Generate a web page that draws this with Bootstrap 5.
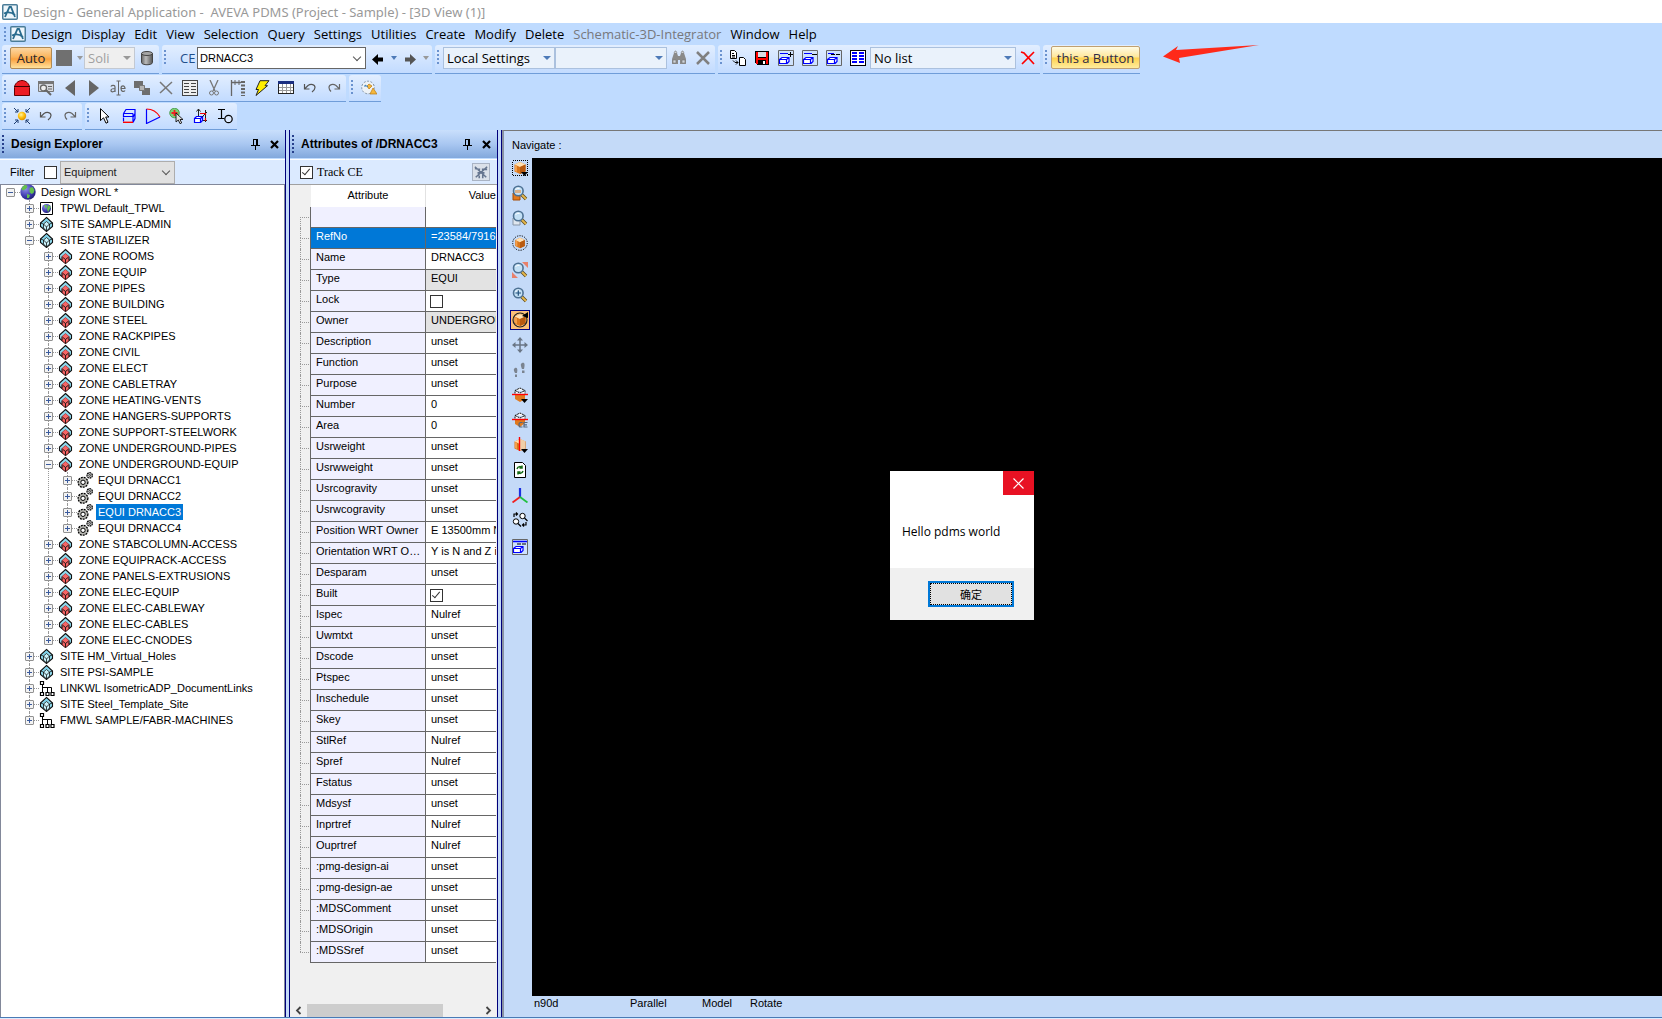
<!DOCTYPE html>
<html lang="en">
<head>
<meta charset="utf-8">
<meta name="viewport" content="width=device-width, initial-scale=1">
<title>Design - General Application - AVEVA PDMS</title>
<link rel="stylesheet" href="https://cdn.jsdelivr.net/npm/bootstrap@5.3.0/dist/css/bootstrap.min.css">
<style>
:root{--sky:#bfdbff;--navy:#00007b;--ui:"Open Sans","Noto Sans CJK SC",sans-serif;--small-ui:"Liberation Sans",Arial,sans-serif}
body{font:13px/20px var(--ui);color:#000;background:var(--sky)}
svg{display:block;flex:none}
.ic{width:16px;height:16px}
.crisp{shape-rendering:crispEdges}
button{padding:0;border:0;background:none;color:inherit}
.title-strip{height:23px;padding-left:2px;color:#999;gap:5px;font-family:"Noto Sans",sans-serif}
.menu-strip{height:22px;padding-left:2px}
.menu-strip a{color:#000;padding:0 4px 0 5px;line-height:20px;text-decoration:none;white-space:nowrap}
.menu-strip a.off{color:#77787c}
.grip{width:8px;flex:none;align-self:stretch;margin:5px 0;background:repeating-linear-gradient(#6a92cf 0 2px,transparent 2px 4px) 2px 0/2px 100% no-repeat}
.tool-row{gap:3px;padding-left:2px}
.tool-group{height:29px;background:linear-gradient(#e2eeff,#c2dbff);border-bottom:1px solid #6f9dd9;border-radius:3px 3px 0 0;padding-bottom:3px}
.tool-group.ends{padding-right:2px}
.tool-row.low .tool-group{height:27px;padding-bottom:0}
.tool-row.low{padding-top:1px}
.tb{width:24px;height:24px;display:flex;align-items:center;justify-content:center;flex:none}
.drop{width:8px;height:20px;display:flex;align-items:center;justify-content:center}
.drop::after,.pick::after{content:"";border:4px solid transparent;border-top-color:#4d7ab8;border-bottom:0;border-left-width:3px;border-right-width:3px}
.drop.off::after,.pick.off::after{border-top-color:#999}
.pick{position:relative;height:22px;flex:none}
.pick::after{position:absolute;right:4px;top:9px;border-left-width:4px;border-right-width:4px;pointer-events:none}
.pick select{appearance:none;width:100%;height:100%;border:1px solid #abc1de;border-radius:0;background:#eaf2fb;padding:0 16px 0 3px;font:13px/18px var(--ui);color:#000}
.pick.off select{background:#efefef;border-color:#c3c9d2;color:#a0a0a0;opacity:1}
.pick.chev::after{border:solid #555;border-width:0 1px 1px 0;width:6px;height:6px;transform:rotate(45deg);top:7px;right:6px}
.w-soli{width:51px}.w-local{width:112px}.w-list{width:146px}.w-ce{width:169px}
.w-ce select{background:#fff;border-color:#666;font:11px/18px var(--small-ui);padding-left:2px}
.ce-label{width:27px;padding-left:10px;color:#1f4e8c}
.btn-auto{width:42px;height:22px;border:1px solid #b08a55;border-radius:2px;background:linear-gradient(#fcd7a3,#fbb45c 45%,#fba23f 55%,#ffe29c);line-height:18px;color:#26262c}
.btn-mine{width:89px;height:23px;border:1px solid #c0a070;border-radius:2px;background:linear-gradient(#fffbe4,#ffe79a 48%,#ffd24d 52%,#ffec9e);line-height:20px;color:#2d2a45;white-space:nowrap}
.arrow{margin-left:20px}
.work{min-height:0}
.dock{font:11px/16px var(--small-ui);min-width:0}
.dock-left{width:285px}
.dock-mid{width:207px}
.splitter{width:5px;flex:none;background:#c4daf8;border:solid var(--navy);border-width:0 1px}
.dock-head{height:28px;background:linear-gradient(#c9dffc,#a9c7f1 50%,#82a8dc);font:bold 12px/28px var(--small-ui);padding-right:1px}
.dock-head h2{font:inherit;margin:0 auto 0 3px;white-space:nowrap}
.dock-head .grip{background-image:repeating-linear-gradient(#27408b 0 2px,transparent 2px 4px)}
.dock-head button{width:19px;height:20px;display:flex;align-items:center;justify-content:center}
.filter-bar{height:25px;margin-top:1px;background:#dbeaff;border-top:1px solid #fff;padding:0 7px 0 10px}
.filter-bar .pick{width:115px;height:23px;margin-left:3px}
.filter-bar select{background:#e1e1e1;border-color:#adadad;font:11px/18px var(--small-ui);color:#222}
.filter-label{width:34px}
.tick{appearance:none;width:13px;height:13px;border:1px solid #333;background:#fff;margin:0;flex:none;position:relative;display:block}
.tick:checked::before{content:"";position:absolute;left:3px;top:0;width:4px;height:8px;border:solid #333;border-width:0 1px 1px 0;transform:rotate(40deg)}
.track{font:12px/16px "Liberation Serif",serif;margin-left:4px}
.brush{width:18px;height:18px;background:#dbe1ea;border:1px solid #a9b3c4;display:flex;align-items:center;justify-content:center}
.tree-box{background:#fff;border:1px solid #82889a;border-width:0 1px;box-shadow:inset 0 1px #82889a;overflow:hidden}
.tree-box ul{list-style:none;margin:0;padding:0}
.tree-box ul ul{padding-left:19px}
.tree-box li{position:relative}
.tree-box ul ul>li::before{content:"";position:absolute;left:9px;top:0;bottom:0;border-left:1px dotted #999}
.tree-box ul ul>li:last-child::before{bottom:auto;height:8px}
.node{display:flex;align-items:center;height:16px;padding-left:5px;white-space:nowrap;position:relative}
.node .dots{width:5px;border-top:1px dotted #999}
.node .lbl{margin-left:3px;padding:0 2px;line-height:16px}
.node .lbl.sel{background:#0078d7;color:#fff}
.exp{width:9px;height:9px;border:1px solid #919191;border-radius:1px;background:linear-gradient(90deg,#3b5b9d,#3b5b9d) center/5px 1px no-repeat,linear-gradient(#3b5b9d,#3b5b9d) center/1px 5px no-repeat,#f3f3f3}
.exp.open{background:linear-gradient(#3b5b9d,#3b5b9d) center/5px 1px no-repeat,#f3f3f3}
.attr-area{background:#f0f0f0;border-top:1px solid #a0a0a0;overflow:hidden;padding-right:1px}
.attr-grid{table-layout:fixed;width:100%;border-collapse:separate;border-spacing:0}
.attr-grid th,.attr-grid td{height:21px;padding:0 0 4px 5px;font-weight:400;white-space:nowrap;overflow:hidden;border-bottom:1px solid #666;border-right:1px solid #666;line-height:16px}
.attr-grid td{background:#fff;border-right:0}
.attr-grid tbody th{background:#f0f0ff;text-overflow:ellipsis;padding-right:4px}
.attr-grid thead th{height:22px;background:#fff;border-bottom:0;border-right-color:#e2e2e2;text-align:center;padding:0 0 2px}
.attr-grid thead th:last-child{border-right:0;text-align:right}
.attr-grid .gut{background:#f0f0f0!important;border-bottom:0;border-right:1px solid #666;padding:0;position:relative;overflow:visible}
.attr-grid thead .gut{border-right-color:#f0f0f0}
.attr-grid tbody .gut::before{content:"";position:absolute;left:10px;right:1px;top:10px;bottom:0;border:dotted #999;border-width:1px 0 0 1px}
.attr-grid tbody tr:not(:first-child) .gut::after{content:"";position:absolute;left:10px;top:0;height:10px;border-left:1px dotted #999}
.attr-grid tbody tr:last-child .gut::before{border-left:0}
.attr-grid .fixed{background:#e3e3e3}
.attr-grid .picked th:not(.gut),.attr-grid .picked td:not(.gut){background:#0078d7;color:#fff}
.attr-grid td:has(.tick){padding-bottom:0}
.attr-grid .tick{margin:0 0 0 -1px}
.c-gut{width:21px}.c-name{width:115px}
.hbar{height:13px;background:#f0f0f0}
.hbar button{width:17px;height:13px;display:flex;align-items:center;justify-content:center}
.hbar .thumb{width:136px;height:13px;background:#cdcdcd}
.view{background:#c4daf8;border-top:1px solid #777;border-left:2px solid #8a93a3;font:11px/16px var(--small-ui);min-width:0}
.nav-label{height:27px;padding:6px 0 0 8px;margin:0}
.nav-tools{width:28px;flex:none;margin-top:-3px}
.nav-tools .vt{height:25px;width:28px;display:flex;align-items:center;justify-content:center;padding-left:4px}
.nav-tools .gap-after{margin-bottom:2px}
.nav-tools .on span{width:20px;height:20px;border:1px solid var(--navy);background:#fcc078;display:flex;align-items:center;justify-content:center}
.canvas3d{background:#000;position:relative}
.view-status{height:21px;padding-left:30px}
.view-status span{line-height:14px}
.s1{width:96px}.s2{width:72px}.s3{width:48px}
.msg-box{position:absolute;left:358px;top:313px;width:144px;height:149px;background:#fff;font:12px/16px var(--ui)}
.msg-box .shut{width:31px;height:24px;background:#e81123;display:flex;align-items:center;justify-content:center}
.msg-box p{margin:0;padding:0 12px}
.msg-foot{height:52px;background:#f0f0f0;padding:13px 20px 0 0}
.ok{width:86px;height:26px;background:#e1e1e1;border:2px solid #0078d7;outline:1px dotted #000;outline-offset:-3px;font:11px/20px "Noto Sans CJK SC",sans-serif}
.base-line{height:2px;background:#dcebff;border-top:1px solid #4a7ab5}
</style>
</head>
<body class="d-flex flex-column vh-100 overflow-hidden">

<svg width="0" height="0" class="position-absolute" aria-hidden="true">
 <defs>
  <radialGradient id="gGlobe" cx=".35" cy=".3" r=".8"><stop offset="0" stop-color="#8d8dea"/><stop offset=".6" stop-color="#3d3aae"/><stop offset="1" stop-color="#1b1b66"/></radialGradient>
  <radialGradient id="gSun" cx=".4" cy=".35" r=".7"><stop offset="0" stop-color="#fff3a0"/><stop offset=".5" stop-color="#ffc20e"/><stop offset="1" stop-color="#d98a00"/></radialGradient>
  <linearGradient id="gCyl"><stop offset="0" stop-color="#666"/><stop offset=".4" stop-color="#bbb"/><stop offset="1" stop-color="#555"/></linearGradient>
 </defs>
 <symbol id="i-logo" viewBox="0 0 16 16"><rect x=".75" y=".75" width="14.500" height="14.500" rx="1" fill="#eef6fb" stroke="#4a7c98" stroke-width="1.500"/><path d="M3 13 7.500 3h1.500l4 10M2 9.500c4-2 8-1 11 1.500" fill="none" stroke="#2a6c8e" stroke-width="1.800"/></symbol>
 <symbol id="i-globe" viewBox="0 0 16 16"><circle cx="8" cy="8" r="7.700" fill="url(#gGlobe)"/><path d="M4 1.500c2-1 4 0 3 2S5 5 4 6 2 6 1.500 5 3 2.500 4 1.500zM9.500 4l3-1 2 3-1 3-2 1-2-2zM7 10l3 1-1 3-2 0z" fill="#63c04d"/></symbol>
 <symbol id="i-tpwl" viewBox="0 0 16 16"><path d="M1.500 2.500h12v12h-12z" fill="#fff" stroke="#000"/><circle cx="7.500" cy="8.500" r="4.500" fill="url(#gGlobe)"/><path d="M5 5l3 0-1 4zM9 5l3 2-3 5-1-3z" fill="#63c04d"/></symbol>
 <symbol id="i-site" viewBox="0 0 16 16"><path d="M7.500 1.500 13.500 7v3.500L7.500 15.500 1.500 10.500V7z" fill="#8fdcf0" stroke="#111" stroke-width="1.100"/><path d="M7.500 5.500 10.500 8v4L7.500 15l-3-3V8z" fill="#c8f1fa" stroke="#111" stroke-width=".8"/><path d="M7.500 15v-4M7.500 11 4.500 8M7.500 11l3-3M4.500 8 1.500 7M10.500 8l3-1" stroke="#111" stroke-width=".8" fill="none"/><path d="M7.500 2.500 10 5 7.500 4.500 3 7.500z" fill="#7bd0ea"/></symbol>
 <symbol id="i-zone" viewBox="0 0 16 16"><path d="M7.500 1.500 13.500 7v3.500L7.500 15.500 1.500 10.500V7z" fill="#8fdcf0" stroke="#111" stroke-width="1.100"/><path d="M7.500 5.500 11 8.500v4l-3.500 3-3.500-3v-4z" fill="#f76464" stroke="#8b2020" stroke-width=".6"/><path d="M7.500 15.500V11.500L5 9.500M7.500 11.500l2.500-2M4 12.500v-4M11 12.500v-4" stroke="#111" stroke-width=".9" fill="none"/></symbol>
 <symbol id="i-equi" viewBox="0 0 16 16"><circle cx="6" cy="10.300" r="4.900" fill="#b9b9b4" stroke="#000" stroke-width="1.300" stroke-dasharray="2 .9"/><circle cx="6" cy="10.300" r="2.200" fill="#fff" stroke="#000"/><circle cx="12.700" cy="3.400" r="2.700" fill="#ccc" stroke="#000" stroke-width="1.200" stroke-dasharray="1.800 .6"/><circle cx="12.700" cy="3.400" r=".9" fill="#fff" stroke="#000" stroke-width=".7"/></symbol>
 <symbol id="i-link" viewBox="0 0 16 16"><path d="M3.500 5v7M3.500 7.500h9V12M8.500 7.500V12" fill="none" stroke="#000"/><path d="M1.500 1.500h3v3h-3zM1.500 12.500h3v3h-3zM7 12.500h3v3H7zM12 12.500h3v3h-3z" fill="#fff" stroke="#000" stroke-width="1.200"/></symbol>
 <symbol id="i-undo" viewBox="0 0 16 16"><path d="M2.500 4v5h5M3 8.500l3-3c3-2 7-1 7 2 0 2-1 3-3 4.500" fill="none" stroke="#555" stroke-width="1.200"/></symbol>
 <symbol id="i-redo" viewBox="0 0 16 16"><path d="M13.500 4v5h-5M13 8.500l-3-3c-3-2-7-1-7 2 0 2 1 3 2 4" fill="none" stroke="#666" stroke-width="1.200"/></symbol>
 <symbol id="i-boxwin" viewBox="0 0 16 16"><path d="M.5.500h15v15H.5z" fill="#cfe2fc" stroke="#666"/><path d="M1.500 9.500 4 7.500h7v4l-2 2M1.500 9.500h7v4h-7zM8.500 9.500l2.500-2" fill="#fff" stroke="#00f" stroke-width="1.200"/></symbol>
 <symbol id="i-cube" viewBox="0 0 16 16"><path d="M2.500 4.500 8 2l5.500 2.500v7L8 14l-5.500-2.500z" fill="#d9761c"/><path d="M2.500 4.500 8 2l5.500 2.500L8 7z" fill="#ffe0b0"/><path d="M8 7l5.500-2.500v7L8 14z" fill="#b85a10"/><path d="M3 5v6l2 1V6z" fill="#f5a04a"/></symbol>
 <symbol id="i-lens" viewBox="0 0 16 16"><path d="M9 9l5 5" stroke="#5a4a20" stroke-width="3.400"/><path d="M9.500 9.500l4.500 4.500" stroke="#e7b84b" stroke-width="1.800"/><circle cx="6.300" cy="6" r="4.800" fill="#c3e0f5" stroke="#4d7193" stroke-width="1.600"/><path d="M3.500 5a3 3 0 0 1 4-1.500" stroke="#fff" fill="none"/></symbol>
</svg>

<header class="bg-white title-strip d-flex align-items-center">
 <svg class="ic"><use href="#i-logo"/></svg>
 <span>Design - General Application -&nbsp; AVEVA PDMS (Project - Sample) - [3D View (1)]</span>
</header>

<nav class="menu-strip d-flex align-items-center" aria-label="Main menu">
 <span class="grip my-1"></span>
 <svg class="ic"><use href="#i-logo"/></svg>
 <ul class="nav flex-nowrap" id="menu"></ul>
</nav>

<div class="tool-row d-flex">
 <div class="tool-group d-flex align-items-center">
  <span class="grip"></span>
  <button class="btn-auto">Auto</button>
  <button class="tb" aria-label="Colour"><svg class="ic"><path d="M0 0h16v16H0z" fill="#707070"/></svg></button>
  <button class="drop off" aria-label="Colour list"></button>
  <div class="pick off w-soli"><select aria-label="Fill" disabled><option>Soli</option></select></div>
  <button class="tb" aria-label="Cylinder"><svg class="ic" viewBox="0 0 16 16"><path d="M2.500 3.500v9c0 3 11 3 11 0v-9z" fill="url(#gCyl)" stroke="#444"/><ellipse cx="8" cy="3.500" rx="5.500" ry="2" fill="#a5a5a5" stroke="#444"/></svg></button>
 </div>
 <div class="tool-group ends d-flex align-items-center">
  <span class="grip"></span>
  <label class="ce-label" for="ce">CE</label>
  <div class="pick chev w-ce"><select id="ce"><option>DRNACC3</option></select></div>
  <button class="tb" aria-label="Back"><svg class="ic" viewBox="0 0 16 16"><path d="M2 9.500 8 4v3.500h5v4H8V15z"/></svg></button>
  <button class="drop" aria-label="Back list"></button>
  <button class="tb" aria-label="Forward"><svg class="ic" viewBox="0 0 16 16"><path d="M14 9.500 8 4v3.500H3v4h5V15z" fill="#555"/></svg></button>
  <button class="drop off" aria-label="Forward list"></button>
 </div>
 <div class="tool-group d-flex align-items-center">
  <span class="grip"></span>
  <div class="pick w-local"><select aria-label="Settings"><option>Local Settings</option></select></div>
  <div class="pick w-local"><select aria-label="Search"><option></option></select></div>
  <button class="tb" aria-label="Find"><svg class="ic" viewBox="0 0 16 16"><path d="M1 9l2-6h3l1 3h2l1-3h3l2 6v5H9v-4H7v4H1z" fill="#8a8a8a"/><path d="M3 3l1-2h1l1 2M10 3l1-2h1l1 2M2 10h3v3H2zM11 10h3v3h-3z" fill="#cfd3d8" stroke="#777" stroke-width=".6"/></svg></button>
  <button class="tb" aria-label="Clear"><svg class="ic" viewBox="0 0 16 16"><path d="M2 2l12 12M14 2 2 14" stroke="#808080" stroke-width="2.500"/></svg></button>
 </div>
 <div class="tool-group d-flex align-items-center">
  <span class="grip"></span>
  <button class="tb" aria-label="Copy list"><svg class="ic" viewBox="0 0 16 16"><path d="M.5.500h4l2 2v6h-6zM9.500 7.500h4l2 2v6h-6z" fill="#fff" stroke="#000"/><path d="M2 3.500h2M2 5.500h3M2 7h3M3 10.500l2 2h3M6 10.500l2 2-2 2" fill="none" stroke="#000"/></svg></button>
  <button class="tb" aria-label="Save"><svg class="ic crisp" viewBox="0 0 16 16"><path d="M1 1h14v14H3l-2-2z"/><path d="M2 2h2v12H2zM12 2h2v12h-2zM4 8h8v2H4z" fill="#f00"/><path d="M4 2h8v5H4z" fill="#d9dde3"/><path d="M9 11h2v3H9z" fill="#fff"/></svg></button>
  <button class="tb" aria-label="Add view"><svg class="ic" viewBox="0 0 16 16"><use href="#i-boxwin"/><path d="M2 3.500h8" stroke="#00f"/><path d="M10 4.500h5M12.500 2v5" stroke="#000"/></svg></button>
  <button class="tb" aria-label="Remove view"><svg class="ic" viewBox="0 0 16 16"><use href="#i-boxwin"/><path d="M2 3.500h8" stroke="#00f"/><path d="M10 4.500h5" stroke="#000"/></svg></button>
  <button class="tb" aria-label="Clear views"><svg class="ic" viewBox="0 0 16 16"><use href="#i-boxwin"/><path d="M2 3.500h6" stroke="#00f"/><path d="M5 4.500h4M10 4.500h4" stroke="#000"/></svg></button>
  <button class="tb" aria-label="Lists"><svg class="ic crisp" viewBox="0 0 16 16"><path d="M.5.500h15v15H.5z" fill="#fff" stroke="#000"/><path d="M2 3h5M2 6h5M2 9h5M2 12h5M9 3h5M9 6h5M9 9h5M9 12h5" stroke="#00f" stroke-width="2"/></svg></button>
  <div class="pick w-list"><select aria-label="List"><option>No list</option></select></div>
  <button class="tb" aria-label="Delete list"><svg class="ic" viewBox="0 0 16 16"><path d="M1 2l3 1 10 11M14 2 2 14" fill="none" stroke="#f00" stroke-width="1.700"/></svg></button>
 </div>
 <div class="tool-group d-flex align-items-center">
  <span class="grip"></span>
  <button class="btn-mine">this a Button</button>
 </div>
 <svg class="arrow" width="100" height="22" viewBox="0 0 100 22"><path d="M0 11.500 15 1l-2 4L96 0 16 13l1 5z" fill="#ff2a1a"/></svg>
</div>

<div class="tool-row low d-flex">
 <div class="tool-group d-flex align-items-center">
  <span class="grip"></span>
  <button class="tb" aria-label="Site"><svg class="ic" viewBox="0 0 16 16"><path d="M.5 15.500v-8C.5 4 4 .5 8 .5s7.500 3.500 7.500 7v8z" fill="#ed1c24" stroke="#600"/><path d="M0 6.500h16" stroke="#400"/></svg></button>
  <button class="tb" aria-label="Search form"><svg class="ic" viewBox="0 0 16 16"><path d="M.5 1.500h15v10H.5z" fill="#d6d9df" stroke="#777"/><path d="M0 2.500h16" stroke="#777" stroke-width="3"/><path d="M10 6.500h4M10 9h4" stroke="#666"/><circle cx="5.500" cy="8" r="3" fill="#eee" stroke="#666" stroke-width="1.300"/><path d="M8 10l5 5" stroke="#666" stroke-width="2"/></svg></button>
  <button class="tb" aria-label="Previous"><svg class="ic" viewBox="0 0 16 16"><path d="M13 0v16L3 8z" fill="#666"/></svg></button>
  <button class="tb" aria-label="Next"><svg class="ic" viewBox="0 0 16 16"><path d="M3 0v16l10-8z" fill="#666"/></svg></button>
  <button class="tb" aria-label="Rename"><svg class="ic" viewBox="0 0 16 16"><path d="M6.500 1h4M8.500 1v14M6.500 15h4" stroke="#666" fill="none"/><path d="M.8 6.500C2 5 5 5 5 7v5M5 8.500c-2 0-4 0-4 2s3 1.500 4 0M11 8.500h4c0-3.500-4-3.500-4 0 0 3.500 3 3.500 4 2" stroke="#666" fill="none" stroke-width="1.200"/></svg></button>
  <button class="tb" aria-label="Copy"><svg class="ic" viewBox="0 0 16 16"><path d="M0 1h9v7H0zM8 8h8v7H8z" fill="#6e6e6e"/><path d="M5.500 5.500h5v5h-5z" fill="#b5b5b5" stroke="#777"/></svg></button>
  <button class="tb" aria-label="Delete"><svg class="ic" viewBox="0 0 16 16"><path d="M2 2l12 12M14 2 2 13" stroke="#777" stroke-width="1.500"/></svg></button>
  <button class="tb" aria-label="Attributes"><svg class="ic crisp" viewBox="0 0 16 16"><path d="M.5.500h15v15H.5z" fill="#eee" stroke="#444"/><path d="M2 3.500h5M2 6.500h5M2 9.500h5M2 12.500h5M9 3.500h5M9 6.500h5M9 9.500h5M9 12.500h5" stroke="#444"/></svg></button>
  <button class="tb" aria-label="Cut"><svg class="ic" viewBox="0 0 16 16"><path d="M4 0l5 11M12 0 7 11" stroke="#777" stroke-width="1.300"/><circle cx="5.500" cy="13" r="2" fill="none" stroke="#777"/><circle cx="10.500" cy="13" r="2" fill="none" stroke="#777"/></svg></button>
  <button class="tb" aria-label="Dimension"><svg class="ic" viewBox="0 0 16 16"><path d="M1.500 0v16M2 2.500h9" stroke="#666" stroke-width="1.300"/><path d="M13 1v15" stroke="#666" stroke-width="4" stroke-dasharray="2 1.500"/><path d="M5 0v5M9 0v5" stroke="#666"/></svg></button>
  <button class="tb" aria-label="Run"><svg class="ic" viewBox="0 0 16 16"><path d="M6 .7h9l-4 5h2.500L2 15.500 4.500 9.500H2z" fill="#ffee00" stroke="#222"/></svg></button>
  <button class="tb" aria-label="Table"><svg class="ic crisp" viewBox="0 0 16 16"><path d="M.5 1.500h15v12H.5z" fill="#fff" stroke="#222"/><path d="M0 1h16v3H0z" fill="#1b2f80"/><path d="M1 7.500h14M1 10.500h14M4.500 4v9M8.500 4v9M12.500 4v9" stroke="#999"/></svg></button>
  <button class="tb" aria-label="Undo"><svg class="ic"><use href="#i-undo"/></svg></button>
  <button class="tb" aria-label="Redo"><svg class="ic"><use href="#i-redo"/></svg></button>
 </div>
 <div class="tool-group d-flex align-items-center">
  <span class="grip"></span>
  <button class="tb" aria-label="Clash"><svg class="ic" viewBox="0 0 16 16"><circle cx="7" cy="7.500" r="6.300" fill="#eef2f6" stroke="#7f8fa0" stroke-dasharray="2 1.500"/><path d="M8 4l3 2-3 3-2-3zM12 8l4 6H9z" fill="#f6b73c" stroke="#b97a10" stroke-width=".7"/><path d="M4 5l3 2M4 5v2" stroke="#357ab8"/></svg></button>
 </div>
</div>

<div class="tool-row low d-flex">
 <div class="tool-group d-flex align-items-center">
  <span class="grip"></span>
  <button class="tb" aria-label="Light"><svg class="ic" viewBox="0 0 16 16"><path d="M0 0l4 4M4 1v3H1M16 0l-4 4M12 1v3h3M0 16l4-4M1 12h3v3M16 16l-4-4M15 12h-3v3" stroke="#1c3c70" fill="none"/><circle cx="8" cy="8" r="4.200" fill="url(#gSun)"/></svg></button>
  <button class="tb" aria-label="Undo view"><svg class="ic"><use href="#i-undo"/></svg></button>
  <button class="tb" aria-label="Redo view"><svg class="ic"><use href="#i-redo"/></svg></button>
 </div>
 <div class="tool-group d-flex align-items-center">
  <span class="grip"></span>
  <button class="tb" aria-label="Select"><svg class="ic" viewBox="0 0 16 16"><path d="M3.500.7v12l3-3 2.500 5.500 2-1L8.700 9H12z" fill="#fff" stroke="#000"/></svg></button>
  <button class="tb" aria-label="Box"><svg class="ic" viewBox="0 0 16 16"><path d="M2.500 5.500 5 1.500h9v9l-2 4M2.500 5.500h9.500M2.500 5.500v3h10l1.500-3M2.500 9.500v4M12 5.500v9" fill="none" stroke="#00f" stroke-width="1.200"/><path d="M2 14.300h10" stroke="#f00" stroke-width="1.400"/></svg></button>
  <button class="tb" aria-label="Sector"><svg class="ic" viewBox="0 0 16 16"><path d="M1.500 1v14.500L15 9" fill="none" stroke="#00f" stroke-width="1.200"/><path d="M1.500 1C8 1 12 4 15 9" fill="none" stroke="#f00" stroke-width="1.200"/></svg></button>
  <button class="tb" aria-label="Pick add"><svg class="ic" viewBox="0 0 16 16"><circle cx="5.500" cy="5" r="4.800" fill="#7ccf74" stroke="#2d8a2d" stroke-width=".7"/><path d="M5.500 2v6M2.500 5h6" stroke="#e22" stroke-width="1.800"/><path d="M7 5v9l2.300-2 1.700 3.700 1.700-.8L11 11.500h3z" fill="#ddd" stroke="#111" stroke-width=".9"/></svg></button>
  <button class="tb" aria-label="Axes box"><svg class="ic" viewBox="0 0 16 16"><path d="M1.500 10.500h6v4h-6zM1.500 10.500l2-2h6l-2 2M9.500 8.500v4l-2 2" fill="#fff" stroke="#00f" stroke-width="1.200"/><path d="M5.500 8V1M3.500 3.500l2-2.500 2 2.500M12.500 2v12M9 9l5-5M10 12.500h4" stroke="#222" fill="none"/><path d="M12.500 5v2M12.500 10v3M7 5.500h5" stroke="#e00" stroke-width="1.200"/></svg></button>
  <button class="tb" aria-label="Connect"><svg class="ic" viewBox="0 0 16 16"><path d="M1 1.500h7M4.500 1.500v9h3M1 10.500h3" fill="none" stroke="#000" stroke-width="1.200"/><circle cx="11.500" cy="11" r="3.700" fill="#dceaff" stroke="#000" stroke-width="1.200"/></svg></button>
 </div>
</div>

<main class="work d-flex flex-grow-1">
 <section class="dock dock-left d-flex flex-column flex-shrink-0">
  <div class="dock-head d-flex align-items-center"><span class="grip"></span><h2>Design Explorer</h2>
   <button aria-label="Pin explorer"><svg width="9" height="11" viewBox="0 0 9 11" class="crisp"><path d="M2 0h5v6H2zM0 6h9v1H0zM4 7h1v4H4z"/><path d="M3 1h2v5H3z" fill="#a9c7f1"/></svg></button>
   <button aria-label="Close explorer"><svg width="9" height="9" viewBox="0 0 9 9"><path d="M1 1l7 7M8 1 1 8" stroke="#000" stroke-width="2.200"/></svg></button>
  </div>
  <div class="filter-bar d-flex align-items-center">
   <label for="flt" class="filter-label">Filter</label>
   <input id="flt" type="checkbox" class="tick">
   <div class="pick chev"><select aria-label="Filter type"><option>Equipment</option></select></div>
  </div>
  <div class="tree-box flex-grow-1" id="tree"></div>
 </section>
 <div class="splitter"></div>
 <section class="dock dock-mid d-flex flex-column flex-shrink-0">
  <div class="dock-head d-flex align-items-center"><span class="grip"></span><h2>Attributes of /DRNACC3</h2>
   <button aria-label="Pin attributes"><svg width="9" height="11" viewBox="0 0 9 11" class="crisp"><path d="M2 0h5v6H2zM0 6h9v1H0zM4 7h1v4H4z"/><path d="M3 1h2v5H3z" fill="#a9c7f1"/></svg></button>
   <button aria-label="Close attributes"><svg width="9" height="9" viewBox="0 0 9 9"><path d="M1 1l7 7M8 1 1 8" stroke="#000" stroke-width="2.200"/></svg></button>
  </div>
  <div class="filter-bar d-flex align-items-center">
   <input id="trk" type="checkbox" class="tick" checked>
   <label for="trk" class="track me-auto">Track CE</label>
   <button class="brush" aria-label="Clear filter"><svg width="14" height="14" viewBox="0 0 16 16"><path d="M1 2l13 12M15 2 2 14M1 4l6 1M9 5h6M4 9h8M6 12v3M10 11v4" stroke="#65758f" stroke-width="1.800"/></svg></button>
  </div>
  <div class="attr-area flex-grow-1">
   <table class="attr-grid"><colgroup><col class="c-gut"><col class="c-name"><col></colgroup>
    <thead><tr><th class="gut"></th><th>Attribute</th><th>Value</th></tr></thead><tbody id="attrs"></tbody></table>
  </div>
  <div class="hbar d-flex">
   <button aria-label="Scroll left"><svg width="7" height="9" viewBox="0 0 7 9"><path d="M5.500 1 2 4.500 5.500 8" fill="none" stroke="#444" stroke-width="1.800"/></svg></button>
   <span class="thumb me-auto"></span>
   <button aria-label="Scroll right"><svg width="7" height="9" viewBox="0 0 7 9"><path d="M1.500 1 5 4.500 1.500 8" fill="none" stroke="#444" stroke-width="1.800"/></svg></button>
  </div>
 </section>
 <div class="splitter"></div>
 <section class="view d-flex flex-column flex-grow-1">
  <p class="nav-label">Navigate :</p>
  <div class="d-flex flex-grow-1">
   <div class="nav-tools" id="tools">
    <button class="vt" aria-label="Zoom to selection"><svg class="ic" viewBox="0 0 16 16"><path class="crisp" d="M.5.500h15v15H.5z" fill="none" stroke="#000" stroke-dasharray="1 1"/><use href="#i-cube"/><path d="M9 12h7l-3.500 4z"/></svg></button>
    <button class="vt" aria-label="Zoom to element"><svg class="ic" viewBox="0 0 16 16"><path d="M1 8h7v7H1z" fill="#e57a1c" stroke="#a34c08"/><use href="#i-lens"/><path d="M3 5h6v3H3z" fill="#d9b08a"/></svg></button>
    <button class="vt" aria-label="Zoom to view"><svg class="ic" viewBox="0 0 16 16"><path d="M1 8h7v7H1z" fill="#dfe6ee" stroke="#8795a6"/><use href="#i-lens"/></svg></button>
    <button class="vt gap-after" aria-label="Limits"><svg class="ic" viewBox="0 0 16 16"><circle cx="8" cy="8" r="7.300" fill="none" stroke="#000" stroke-dasharray="1.200 1.200"/><svg x="1" y="1" width="14" height="14"><use href="#i-cube"/></svg></svg></button>
    <button class="vt" aria-label="Zoom extents"><svg class="ic" viewBox="0 0 16 16"><path d="M10 0h6v6zM0 10v6h6z" fill="#e8806a"/><use href="#i-lens"/></svg></button>
    <button class="vt" aria-label="Zoom in"><svg class="ic" viewBox="0 0 16 16"><use href="#i-lens"/><path d="M3.500 6h5.500M6.300 3.300v5.500" stroke="#23507c" stroke-width="1.200"/></svg></button>
    <button class="vt on" aria-label="Rotate"><span><svg class="ic" viewBox="0 0 16 16"><use href="#i-cube"/><circle cx="8" cy="8" r="7" fill="none" stroke="#222" stroke-width="1.200"/><path d="M10 4l6-4v6z"/></svg></span></button>
    <button class="vt" aria-label="Pan"><svg class="ic" viewBox="0 0 16 16"><path d="M8 1v14M1 8h14" stroke="#6a7685" stroke-width="1.500"/><path d="M8 0l3 3.500H5zM8 16l3-3.500H5zM0 8l3.500-3v6zM16 8l-3.500-3v6z" fill="#6a7685"/></svg></button>
    <button class="vt" aria-label="Walk"><svg class="ic" viewBox="0 0 16 16"><path d="M3 6c2-1 3 1 2 5H3C2 9 1 7 3 6zM3 12.500h2V15H3zM10 1c3-1 3 2 2 6h-2C9 4 8 2 10 1zM10 8.500h2.500V11H10z" fill="#7b8490"/></svg></button>
    <button class="vt" aria-label="Clip box"><svg class="ic" viewBox="0 0 16 16"><path d="M3 7h10v5l-5 3-5-3z" fill="#e07a20"/><path d="M3 6.500V3.500L8 1l5 2.500v3M3 3.500 8 6l5-2.500" fill="#fff" stroke="#111" stroke-dasharray="2 .7"/><path d="M0 7.500h16" stroke="#f00" stroke-width="1.400"/><path d="M9 12h7l-3.500 4z"/></svg></button>
    <button class="vt" aria-label="Clip element"><svg class="ic" viewBox="0 0 16 16"><path d="M3 7h10v4l-5 4-5-3z" fill="#e07a20"/><path d="M3 6.500V3.500L8 1l5 2.500v3M3 3.500 8 6l5-2.500" fill="#fff" stroke="#111" stroke-dasharray="2 .7"/><path d="M0 7.500h16" stroke="#f00" stroke-width="1.400"/><path d="M10.500 10.500h-2c-2 0-2 4.500 0 4.500h2M15.500 10.500H12V15h3.500M12 12.800h3" fill="none" stroke="#56687e" stroke-width="1.200"/></svg></button>
    <button class="vt" aria-label="Clip plane"><svg class="ic" viewBox="0 0 16 16"><use href="#i-cube"/><path d="M8 2l5.500 2.500v7L8 14z" fill="#efcfa8"/><path d="M7.500 0v14" stroke="#f00" stroke-width="1.400"/><path d="M9 12h7l-3.500 4z"/></svg></button>
    <button class="vt" aria-label="Refresh"><svg class="ic" viewBox="0 0 16 16"><path d="M2.500.500h8l3 3v12h-11z" fill="#fff" stroke="#000"/><path d="M5 7c1-3 4-3 5-1M10 3.500V6H7.500M11 9c-1 3-4 3-5 1M6 12.500V10h2.500" fill="none" stroke="#176b17" stroke-width="1.500"/></svg></button>
    <button class="vt" aria-label="Axes"><svg class="ic" viewBox="0 0 16 16"><path d="M8 10V1" stroke="#1a2fe0" stroke-width="2.200"/><path d="M8 10 .5 15.500" stroke="#f02020" stroke-width="1.800"/><path d="M8 10l7.500 5.500" stroke="#22c040" stroke-width="1.800"/></svg></button>
    <button class="vt gap-after" aria-label="Swap zoom"><svg class="ic" viewBox="0 0 16 16"><g fill="#fff" stroke="#000"><circle cx="10.500" cy="4" r="2.700"/><circle cx="4" cy="9.500" r="2.700"/></g><path d="M12.500 6l3 3M6 11.500l3 3M2 5V2h3M4 .5 5.500 2 4 3.500M14 10v3h-3M12 11.500 10.500 13l1.500 1.500" fill="none" stroke="#000" stroke-width="1.200"/></svg></button>
    <button class="vt" aria-label="View list"><svg class="ic" viewBox="0 0 16 16"><use href="#i-boxwin"/><path d="M1 2.500h14" stroke="#00f" stroke-width="1.500"/><path d="M5 5h4M10 5h4" stroke="#000"/></svg></button>
   </div>
   <div class="canvas3d flex-grow-1">
    <div class="msg-box d-flex flex-column" role="dialog" aria-label="Message">
     <button class="shut align-self-end" aria-label="Close message"><svg width="11" height="11" viewBox="0 0 11 11"><path d="M.5.500l10 10M10.500.500l-10 10" stroke="#fff" stroke-width="1.200"/></svg></button>
     <p class="my-auto">Hello pdms world</p>
     <div class="msg-foot d-flex justify-content-end"><button class="ok">确定</button></div>
    </div>
   </div>
  </div>
  <div class="view-status d-flex"><span class="s1">n90d</span><span class="s2">Parallel</span><span class="s3">Model</span><span>Rotate</span></div>
 </section>
</main>
<div class="base-line"></div>

<script>
const menu = ['Design','Display','Edit','View','Selection','Query','Settings','Utilities','Create','Modify','Delete','Schematic-3D-Integrator','Window','Help'];
document.getElementById('menu').innerHTML = menu.map(m => `<li><a href="#"${m.startsWith('Schem') ? ' class="off"' : ''}>${m}</a></li>`).join('');

const zone = (name, kids) => ({ t: 'ZONE ' + name, i: 'zone', kids });
const site = (name, kids) => ({ t: 'SITE ' + name, i: 'site', kids });
const equi = n => ({ t: 'EQUI DRNACC' + n, i: 'equi', sel: n === 3 });
const tree = [{ t: 'Design WORL *', i: 'globe', kids: [
  { t: 'TPWL Default_TPWL', i: 'tpwl' },
  site('SAMPLE-ADMIN'),
  site('STABILIZER', [
    ...['ROOMS','EQUIP','PIPES','BUILDING','STEEL','RACKPIPES','CIVIL','ELECT','CABLETRAY','HEATING-VENTS','HANGERS-SUPPORTS','SUPPORT-STEELWORK','UNDERGROUND-PIPES'].map(n => zone(n)),
    zone('UNDERGROUND-EQUIP', [1, 2, 3, 4].map(equi)),
    ...['STABCOLUMN-ACCESS','EQUIPRACK-ACCESS','PANELS-EXTRUSIONS','ELEC-EQUIP','ELEC-CABLEWAY','ELEC-CABLES','ELEC-CNODES'].map(n => zone(n))
  ]),
  site('HM_Virtual_Holes'),
  site('PSI-SAMPLE'),
  { t: 'LINKWL IsometricADP_DocumentLinks', i: 'link' },
  site('Steel_Template_Site'),
  { t: 'FMWL SAMPLE/FABR-MACHINES', i: 'link' }
] }];
const draw = list => '<ul>' + list.map(n => `<li><div class="node"><span class="exp${n.kids ? ' open' : ''}"></span><span class="dots"></span><svg class="ic"><use href="#i-${n.i}"/></svg><span class="lbl${n.sel ? ' sel' : ''}">${n.t}</span></div>${n.kids ? draw(n.kids) : ''}</li>`).join('') + '</ul>';
document.getElementById('tree').innerHTML = draw(tree);

const attrs = [['',''],['RefNo','=23584/7916'],['Name','DRNACC3'],['Type','EQUI'],['Lock',false],['Owner','UNDERGROUND-EQUIP'],['Description'],['Function'],['Purpose'],['Number','0'],['Area','0'],['Usrweight'],['Usrwweight'],['Usrcogravity'],['Usrwcogravity'],['Position WRT Owner','E 13500mm N'],['Orientation WRT Owner','Y is N and Z is U'],['Desparam'],['Built',true],['Ispec','Nulref'],['Uwmtxt'],['Dscode'],['Ptspec'],['Inschedule'],['Skey'],['StlRef','Nulref'],['Spref','Nulref'],['Fstatus'],['Mdsysf'],['Inprtref','Nulref'],['Ouprtref','Nulref'],[':pmg-design-ai'],[':pmg-design-ae'],[':MDSComment'],[':MDSOrigin'],[':MDSSref']];
document.getElementById('attrs').innerHTML = attrs.map(([k, v = 'unset']) => {
  const cell = typeof v === 'boolean' ? `<input type="checkbox" class="tick" aria-label="${k}"${v ? ' checked' : ''}>` : v;
  return `<tr${k === 'RefNo' ? ' class="picked"' : ''}><td class="gut"></td><th scope="row">${k}</th><td${k === 'Type' || k === 'Owner' ? ' class="fixed"' : ''}>${cell}</td></tr>`;
}).join('');
</script>
<script src="https://cdn.jsdelivr.net/npm/bootstrap@5.3.0/dist/js/bootstrap.bundle.min.js"></script>
</body>
</html>
